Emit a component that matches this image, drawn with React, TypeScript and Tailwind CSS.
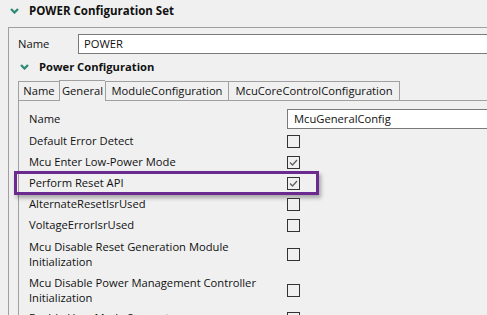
import type { ReactNode } from "react";

function Chevron() {
  return (
    <svg width="9" height="6" viewBox="0 0 9 6" className="shrink-0">
      <polyline points="1,1 4.5,4.5 8,1" fill="none" stroke="#2f8a77" strokeWidth="2.3" />
    </svg>
  );
}

function Box({ checked }: { checked?: boolean }) {
  return (
    <div className="w-[13px] h-[13px] border border-[#333333] bg-[#f0f0f0] shrink-0">
      {checked && (
        <svg width="11" height="11" viewBox="0 0 11 11">
          <polyline points="2,5.5 4.5,8 9,3" fill="none" stroke="#606060" strokeWidth="1.3" />
        </svg>
      )}
    </div>
  );
}

function Row({ label, checked, tall, children }: { label: ReactNode; checked?: boolean; tall?: boolean; children?: ReactNode }) {
  return (
    <div className={`relative flex items-center ${tall ? "h-[36px] leading-[15px]" : "h-[21px]"}`}>
      <div className="w-[258px] shrink-0 whitespace-nowrap">{label}</div>
      <Box checked={checked} />
      {children}
    </div>
  );
}

const tabs = [
  { name: "Name", w: "w-[41px]" },
  { name: "General", w: "w-[46px]", active: true },
  { name: "ModuleConfiguration", w: "w-[123px]" },
  { name: "McuCoreControlConfiguration", w: "w-[172px]" },
];

export default function App() {
  return (
    <div className="w-[487px] h-[315px] overflow-hidden bg-[#f0f0f0] text-[11.2px] text-[#111] font-['Segoe_UI','Open_Sans',sans-serif]">
      {/* header */}
      <div className="h-[27px] flex items-center pl-[10px] gap-[10px] pb-[5px]">
        <Chevron />
        <span className="font-bold text-[11.5px]">POWER Configuration Set</span>
      </div>

      <div className="ml-[8px] border-l border-t border-[#a0a0a0] h-[300px]">
        {/* name field */}
        <div className="flex items-center mt-[6px] pl-[9px]">
          <span className="w-[60px]">Name</span>
          <div className="flex-1 h-[20px] bg-white border border-[#7a7a7a] border-r-0 pl-[5px] flex items-center">POWER</div>
        </div>

        {/* section */}
        <div className="flex items-center h-[26px] pl-[11px] gap-[10px]">
          <Chevron />
          <span className="font-bold">Power Configuration</span>
        </div>

        {/* tabs */}
        <div className="ml-[9px] flex items-end h-[20px] relative z-10">
          {tabs.map((t, i) => (
            <div
              key={t.name}
              className={`${t.w} flex items-center justify-center whitespace-nowrap overflow-hidden border-t border-l border-[#a0a0a0] bg-[#f0f0f0] ${
                i === tabs.length - 1 ? "border-r" : ""
              } ${t.active ? "h-[21px] -mb-px" : "h-[19px]"}`}
            >
              {t.name}
            </div>
          ))}
        </div>

        {/* tab content */}
        <div className="ml-[9px] border-l border-t border-[#a0a0a0] pt-[8px] pl-[10px]">
          <div className="flex items-start h-[22px]">
            <div className="w-[258px] shrink-0 leading-[20px]">Name</div>
            <div className="flex-1 h-[20px] bg-white border border-[#7a7a7a] border-r-0 pl-[6px] flex items-center">
              McuGeneralConfig
            </div>
          </div>
          <Row label="Default Error Detect" />
          <Row label="Mcu Enter Low-Power Mode" checked />
          <Row label="Perform Reset API" checked>
            <div className="absolute left-[-15px] top-[-2px] w-[305px] h-[24px] border-[3px] border-[#6b2a8f] shadow-[2px_3px_4px_rgba(0,0,0,0.3)]" />
          </Row>
          <Row label="AlternateResetIsrUsed" />
          <Row label="VoltageErrorIsrUsed" />
          <Row
            tall
            label={
              <>
                Mcu Disable Reset Generation Module
                <br />
                Initialization
              </>
            }
          />
          <Row
            tall
            label={
              <>
                Mcu Disable Power Management Controller
                <br />
                Initialization
              </>
            }
          />
          <Row label="Enable User Mode Support" />
        </div>
      </div>
    </div>
  );
}
